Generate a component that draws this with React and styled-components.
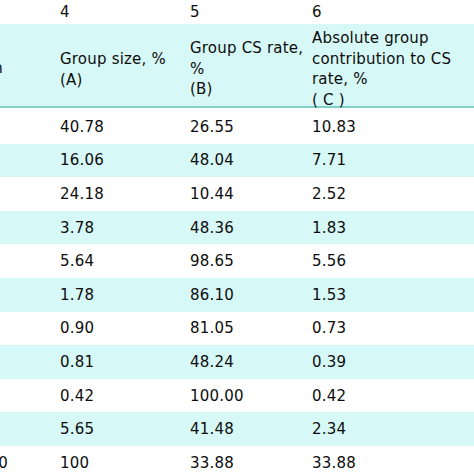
import React from "react";
import styled, { createGlobalStyle } from "styled-components";

const Global = createGlobalStyle`
  html, body { margin: 0; padding: 0; background: #ffffff; }
  body { font-family: "DejaVu Sans", Verdana, sans-serif; }
`;

const CYAN = "#d6f8f6";
const TEAL = "#7fcfca";

const Page = styled.div`
  width: 474px;
  height: 474px;
  overflow: hidden;
  background: #fff;
`;

const Table = styled.div`
  width: 534px;
  margin-left: -60px;
  color: #0d0d0d;
  font-size: 15px;
  letter-spacing: 0.2px;
`;

const Cols = `
  display: grid;
  grid-template-columns: 110px 130px 122px 172px;
`;

const NumRow = styled.div`
  ${Cols}
  height: 24px;
  align-items: center;
  line-height: 20px;
`;

const HeadRow = styled.div`
  ${Cols}
  height: 82px;
  background: ${CYAN};
  border-bottom: 2px solid ${TEAL};
  align-items: start;
  line-height: 20.5px;
`;

const Body = styled.div`
  padding-top: 2px;
`;

const BodyRow = styled.div`
  ${Cols}
  height: 33.6px;
  align-items: center;
  line-height: 20px;
  background: ${(p) => (p.$shaded ? CYAN : "#ffffff")};
`;

const Cell = styled.div`
  padding-left: 10px;
  padding-top: ${(p) => p.$pt || 0}px;
  white-space: nowrap;
  height: 100%;
  display: flex;
  flex-direction: column;
  justify-content: ${(p) => (p.$top ? "flex-start" : "center")};
  box-sizing: border-box;
`;

const EdgeCell = styled.div`
  text-align: right;
  padding-right: ${(p) => p.$pr || 42}px;
  white-space: nowrap;
  align-self: ${(p) => (p.$top ? "start" : "center")};
  padding-top: ${(p) => p.$pt || 0}px;
`;

const rows = [
  ["", "40.78", "26.55", "10.83"],
  ["", "16.06", "48.04", "7.71"],
  ["", "24.18", "10.44", "2.52"],
  ["", "3.78", "48.36", "1.83"],
  ["", "5.64", "98.65", "5.56"],
  ["", "1.78", "86.10", "1.53"],
  ["", "0.90", "81.05", "0.73"],
  ["", "0.81", "48.24", "0.39"],
  ["", "0.42", "100.00", "0.42"],
  ["", "5.65", "41.48", "2.34"],
  ["1000", "100", "33.88", "33.88"],
];

export default function App() {
  return (
    <Page>
      <Global />
      <Table>
        <NumRow>
          <EdgeCell />
          <Cell>4</Cell>
          <Cell>5</Cell>
          <Cell>6</Cell>
        </NumRow>
        <HeadRow>
          <EdgeCell $top $pt={34} $pr={47}>n</EdgeCell>
          <Cell $top $pt={25}>
            <span>Group size, %</span>
            <span>(A)</span>
          </Cell>
          <Cell $top $pt={14}>
            <span>Group CS rate,</span>
            <span>%</span>
            <span>(B)</span>
          </Cell>
          <Cell $top $pt={4}>
            <span>Absolute group</span>
            <span>contribution to CS</span>
            <span>rate, %</span>
            <span>( C )</span>
          </Cell>
        </HeadRow>
        <Body>
          {rows.map((r, i) => (
            <BodyRow key={i} $shaded={i % 2 === 1}>
              <EdgeCell>{r[0]}</EdgeCell>
              <Cell>{r[1]}</Cell>
              <Cell>{r[2]}</Cell>
              <Cell>{r[3]}</Cell>
            </BodyRow>
          ))}
        </Body>
      </Table>
    </Page>
  );
}
